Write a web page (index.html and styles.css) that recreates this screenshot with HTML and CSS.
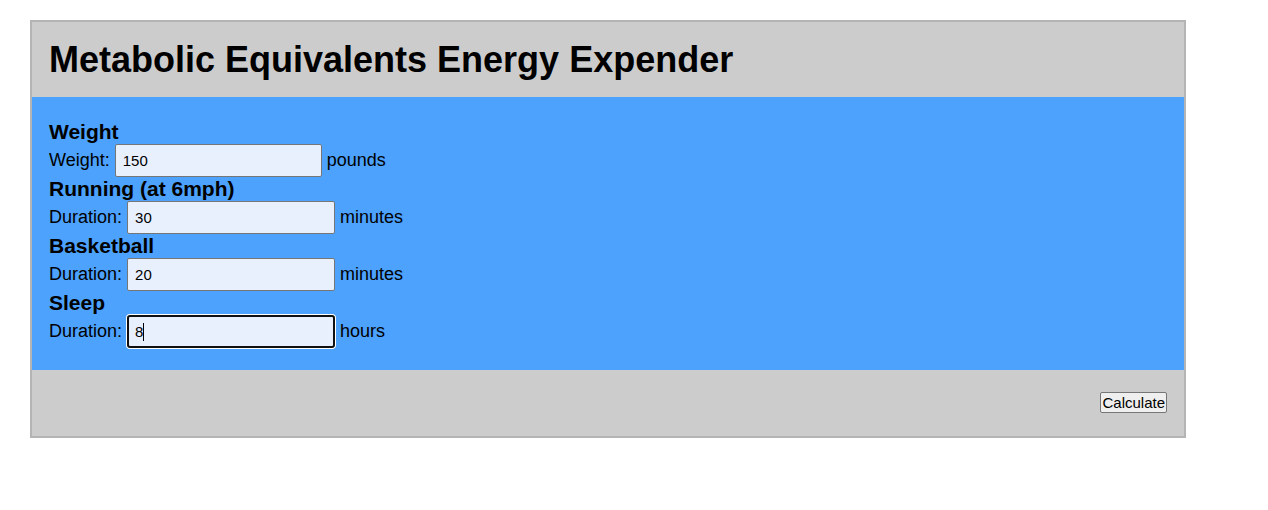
FILE: index.html
```html
<!DOCTYPE html>
<html>
<head>
<meta charset="utf-8">
<title>Metabolic Equivalents Energy Expender</title>
<link rel="stylesheet" href="styles.css">
</head>
<body>
<div class="app">
  <header class="app-header">
    <h1 class="title">Metabolic Equivalents Energy Expender</h1>
  </header>
  <main class="app-body">
    <section class="group">
      <h3 class="group-title">Weight</h3>
      <div class="row">
        <span class="label">Weight:</span>
        <span class="field"><input class="input input-narrow" type="text" value="150"></span>
        <span class="unit">pounds</span>
      </div>
    </section>
    <section class="group">
      <h3 class="group-title">Running (at 6mph)</h3>
      <div class="row">
        <span class="label">Duration:</span>
        <span class="field"><input class="input" type="text" value="30"></span>
        <span class="unit">minutes</span>
      </div>
    </section>
    <section class="group">
      <h3 class="group-title">Basketball</h3>
      <div class="row">
        <span class="label">Duration:</span>
        <span class="field"><input class="input" type="text" value="20"></span>
        <span class="unit">minutes</span>
      </div>
    </section>
    <section class="group">
      <h3 class="group-title">Sleep</h3>
      <div class="row">
        <span class="label">Duration:</span>
        <span class="field"><input class="input input-focused" type="text" value="8"><span class="caret"></span></span>
        <span class="unit">hours</span>
      </div>
    </section>
  </main>
  <footer class="app-footer">
    <button class="btn" type="button">Calculate</button>
  </footer>
</div>
</body>
</html>
```
FILE: styles.css
```css
html, body {
  margin: 0;
  padding: 0;
  background: #ffffff;
}
body {
  font-family: "Liberation Sans", Arial, sans-serif;
  font-size: 18px;
  color: #000;
}
.app {
  margin: 20px 0 0 30px;
  width: 1152px;
  border: 2px solid #b4b4b4;
  background: #cccccc;
}
.app-header {
  padding: 17px;
  height: 41px;
}
.title {
  margin: 0;
  font-size: 36px;
  font-weight: bold;
  line-height: 41px;
}
.app-body {
  background: #4ca2fd;
  padding: 23px 17px 22px 17px;
}
.group-title {
  margin: 0;
  font-size: 21px;
  font-weight: bold;
  line-height: 24px;
  height: 24px;
}
.row {
  display: flex;
  align-items: center;
  gap: 5px;
  height: 33px;
}
.label, .unit {
  line-height: 21px;
  position: relative;
  top: -0.5px;
}
.field {
  position: relative;
  display: flex;
}
.input {
  box-sizing: border-box;
  width: 208px;
  height: 33px;
  margin: 0;
  padding: 0 7px;
  border: 1px solid #767676;
  border-radius: 2px;
  background: #e8f0fe;
  font-family: "Liberation Sans", Arial, sans-serif;
  font-size: 15px;
  color: #000;
  outline: none;
}
.input-narrow {
  width: 207px;
}
.input-focused {
  border: 2px solid #101010;
  border-radius: 3px;
  padding: 0 6px;
  box-shadow: 0 0 0 1px #ffffff;
}
.caret {
  position: absolute;
  left: 16px;
  top: 8px;
  width: 1px;
  height: 18px;
  background: #000;
}
.app-footer {
  display: flex;
  justify-content: flex-end;
  padding: 22px 17px 23px 17px;
}
.btn {
  box-sizing: border-box;
  height: 21px;
  margin: 0;
  padding: 0 1px;
  border: 1px solid #767676;
  border-radius: 2px;
  background: #efefef;
  font-family: "Liberation Sans", Arial, sans-serif;
  font-size: 15px;
  color: #000;
  line-height: 19px;
}
```
